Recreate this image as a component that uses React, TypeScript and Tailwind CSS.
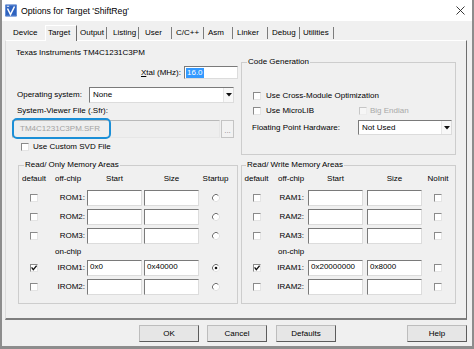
import React from "react";

function Check({ checked = false, disabled = false }: { checked?: boolean; disabled?: boolean }) {
  return (
    <span
      className={
        disabled
          ? "inline-flex h-[8px] w-[8px] shrink-0 items-center justify-center border border-t-[#c6c6c6] border-l-[#c6c6c6] border-r-[#ececec] border-b-[#ececec] bg-[#f6f6f6]"
          : "inline-flex h-[8px] w-[8px] shrink-0 items-center justify-center border border-t-[#8a8a8a] border-l-[#8a8a8a] border-r-[#e4e4e4] border-b-[#e4e4e4] bg-white"
      }
    >
      {checked && (
        <svg width="6" height="6" viewBox="0 0 6 6">
          <path d="M0.6 2.4 L2.3 4.6 L5.6 0.7" fill="none" stroke="#111" strokeWidth="1.3" />
        </svg>
      )}
    </span>
  );
}

function Radio({ checked = false }: { checked?: boolean }) {
  return (
    <svg width="8" height="8" viewBox="0 0 8 8">
      <circle cx="4" cy="4" r="3.5" fill="#fff" />
      <path d="M1.5 6.5 A3.5 3.5 0 0 1 6.5 1.5" stroke="#707070" fill="none" />
      <path d="M6.5 1.5 A3.5 3.5 0 0 1 1.5 6.5" stroke="#e2e2e2" fill="none" />
      {checked && <circle cx="4" cy="4" r="1.3" fill="#111" />}
    </svg>
  );
}

function Field({ value = "" }: { value?: string }) {
  return (
    <div className="h-[16px] w-[55px] border border-t-[#7a7a7a] border-l-[#7a7a7a] border-r-[#dcdcdc] border-b-[#dcdcdc] bg-white pl-[2px] leading-[12px]">
      {value}
    </div>
  );
}

function Dropdown({ value, className }: { value: string; className: string }) {
  return (
    <div
      className={`${className} flex items-center border border-t-[#7a7a7a] border-l-[#7a7a7a] border-r-[#dcdcdc] border-b-[#dcdcdc] bg-white`}
    >
      <span className="flex-1 pl-[3px]">{value}</span>
      <span className="flex h-full w-[10px] items-center justify-center border-l border-[#e6e6e6] bg-[#f8f8f8]">
        <svg width="6" height="4" viewBox="0 0 6 4">
          <path d="M0 0 H6 L3 3.5 Z" fill="#111" />
        </svg>
      </span>
    </div>
  );
}

type MemRow = { checked?: boolean; label: string; start?: string; size?: string; last?: "radio" | "radio-on" | "check" };

function LastCell({ kind }: { kind?: MemRow["last"] }) {
  if (kind === "check") return <Check />;
  return <Radio checked={kind === "radio-on"} />;
}

function ReadOnlyGroup() {
  const offChip: MemRow[] = [
    { label: "ROM1:", last: "radio" },
    { label: "ROM2:", last: "radio" },
    { label: "ROM3:", last: "radio" },
  ];
  const onChip: MemRow[] = [
    { checked: true, label: "IROM1:", start: "0x0", size: "0x40000", last: "radio-on" },
    { label: "IROM2:", last: "radio" },
  ];
  const row = (r: MemRow) => (
    <div key={r.label} className="mt-[3px] flex h-[16px] items-center first:mt-[6px]">
      <div className="flex w-[30px] justify-center">
        <Check checked={r.checked} />
      </div>
      <div className="w-[36px] text-right">{r.label}</div>
      <div className="ml-[2px]">
        <Field value={r.start} />
      </div>
      <div className="ml-[2px]">
        <Field value={r.size} />
      </div>
      <div className="flex w-[33px] justify-center">
        <LastCell kind={r.last} />
      </div>
    </div>
  );
  return (
    <fieldset className="ml-[6px] h-[144px] w-[220px] border border-[#cdcdcd]">
      <legend className="ml-[5px] px-[1px] leading-[10px]">Read/ Only Memory Areas</legend>
      <div className="mt-[4px] flex h-[10px] items-center whitespace-nowrap">
        <div className="w-[30px] text-center">default</div>
        <div className="w-[36px] pl-[6px]">off-chip</div>
        <div className="ml-[2px] w-[55px] text-center">Start</div>
        <div className="ml-[2px] w-[55px] text-center">Size</div>
        <div className="w-[33px] text-center">Startup</div>
      </div>
      <div className="flex flex-col">{offChip.map(row)}</div>
      <div className="mt-[3px] h-[10px] pl-[36px]">on-chip</div>
      <div className="flex flex-col [&>div:first-child]:mt-[3px]">{onChip.map(row)}</div>
    </fieldset>
  );
}

function ReadWriteGroup() {
  const offChip: MemRow[] = [
    { label: "RAM1:", last: "check" },
    { label: "RAM2:", last: "check" },
    { label: "RAM3:", last: "check" },
  ];
  const onChip: MemRow[] = [
    { checked: true, label: "IRAM1:", start: "0x20000000", size: "0x8000", last: "check" },
    { label: "IRAM2:", last: "check" },
  ];
  const row = (r: MemRow) => (
    <div key={r.label} className="mt-[3px] flex h-[16px] items-center first:mt-[6px]">
      <div className="flex w-[29px] justify-center">
        <Check checked={r.checked} />
      </div>
      <div className="w-[33px] text-right">{r.label}</div>
      <div className="ml-[4px]">
        <Field value={r.start} />
      </div>
      <div className="ml-[4px]">
        <Field value={r.size} />
      </div>
      <div className="flex w-[32px] justify-center">
        <LastCell kind={r.last} />
      </div>
    </div>
  );
  return (
    <fieldset className="ml-[3px] h-[144px] w-[215px] border border-[#cdcdcd]">
      <legend className="ml-[4px] px-[1px] leading-[10px]">Read/ Write Memory Areas</legend>
      <div className="mt-[4px] flex h-[10px] items-center whitespace-nowrap">
        <div className="w-[29px] text-center">default</div>
        <div className="w-[33px] pl-[7px]">off-chip</div>
        <div className="ml-[4px] w-[55px] text-center">Start</div>
        <div className="ml-[4px] w-[55px] text-center">Size</div>
        <div className="w-[32px] text-center">NoInit</div>
      </div>
      <div className="flex flex-col">{offChip.map(row)}</div>
      <div className="mt-[3px] h-[10px] pl-[36px]">on-chip</div>
      <div className="flex flex-col [&>div:first-child]:mt-[3px]">{onChip.map(row)}</div>
    </fieldset>
  );
}

function KeilIcon() {
  return (
    <svg width="12" height="13" viewBox="0 0 12 13">
      <rect x="0" y="0.5" width="12" height="12" rx="1" fill="#2f63bf" />
      <rect x="0.5" y="1" width="11" height="11" rx="0.8" fill="none" stroke="#8fb0e6" strokeWidth="0.6" />
      <path d="M2.5 4.5 L5.5 10.5 L9.5 2.5" fill="none" stroke="#fff" strokeWidth="1.5" />
      <path d="M1.8 2.6 Q3 1.6 4.2 2.6" fill="none" stroke="#fff" strokeWidth="0.9" />
    </svg>
  );
}

export default function App() {
  const tab = "h-[12px] mb-[1px] leading-[12px] border-r border-[#7c7c7c]";
  return (
    <div className="flex h-[349px] w-[474px] flex-col overflow-hidden border-l-2 border-r-2 border-b-[3px] border-[#8d8d8d] bg-[#f0f0f0] font-['Liberation_Sans',Arial,sans-serif] text-[8px] leading-[10px] text-black">
      {/* title bar */}
      <div className="flex h-[21px] shrink-0 items-center bg-white pl-[3px] pr-[7px]">
        <KeilIcon />
        <span className="ml-[4px] text-[8.7px]">Options for Target 'ShiftReg'</span>
        <svg className="ml-auto" width="9" height="9" viewBox="0 0 9 9">
          <path d="M0.5 0.5 L8.5 8.5 M8.5 0.5 L0.5 8.5" stroke="#222" strokeWidth="0.9" />
        </svg>
      </div>

      {/* tabs */}
      <div className="flex h-[19px] shrink-0 items-end whitespace-nowrap">
        <div className="mb-[1px] h-[12px] w-[43px] pl-[11px] leading-[12px]">Device</div>
        <div className="relative z-10 -mb-px h-[16px] w-[32px] border-t border-l border-r border-t-white border-l-white border-r-[#6d6d6d] bg-[#f0f0f0] pl-[2px] leading-[13px]">
          Target
        </div>
        <div className={`${tab} w-[30px] pl-[3px]`}>Output</div>
        <div className={`${tab} w-[32px] pl-[6px]`}>Listing</div>
        <div className={`${tab} w-[33px] pl-[6px]`}>User</div>
        <div className={`${tab} w-[32px] pl-[4px]`}>C/C++</div>
        <div className={`${tab} w-[29px] pl-[4px]`}>Asm</div>
        <div className={`${tab} w-[35px] pl-[4px]`}>Linker</div>
        <div className={`${tab} w-[32px] pl-[4px]`}>Debug</div>
        <div className={`${tab} w-[34px] pl-[3px]`}>Utilities</div>
      </div>

      {/* tab page */}
      <div className="ml-[3px] mr-[5px] flex h-[280px] shrink-0 flex-col border border-b-2 border-t-white border-l-[#dcdcdc] border-r-[#6e6e6e] border-b-[#7e7e7e] pl-[6px] pt-[7px]">
        <div className="flex">
          <div className="flex w-[226px] flex-col">
            <div className="h-[10px] pl-[4px]">Texas Instruments TM4C1231C3PM</div>
            <div className="mt-[8px] flex h-[13px] items-center justify-end">
              <span>
                <span className="underline">X</span>tal (MHz):
              </span>
              <div className="ml-[3px] flex h-[13px] w-[54px] items-center border border-t-[#7a7a7a] border-l-[#7a7a7a] border-r-[#dcdcdc] border-b-[#dcdcdc] bg-white pl-[1px]">
                <span className="bg-[#3399ff] px-[1px] text-white">16.0</span>
              </div>
            </div>
            <div className="mt-[8px] flex h-[16px] items-center pl-[5px] pr-[4px]">
              <span>Operating system:</span>
              <Dropdown value="None" className="ml-auto h-[16px] w-[145px]" />
            </div>
            <div className="mt-[3px] h-[10px] pl-[5px]">System-Viewer File (.Sfr):</div>
            <div className="mt-[4px] flex h-[18px]">
              <div className="relative flex w-[208px] items-center border border-t-[#b9b9b9] border-l-[#b9b9b9] border-r-[#e6e6e6] border-b-[#e6e6e6] bg-[#eeeeee] pl-[7px] text-[#a3a3a3]">
                TM4C1231C3PM.SFR
                <div className="absolute -top-[3px] -left-[1px] h-[21px] w-[99px] rounded-[5px] border-[2.5px] border-[#1b8fd7]" />
              </div>
              <div className="ml-[1px] flex w-[13px] items-end justify-center border border-[#c4c4c4] bg-[#f2f2f2] pb-[3px] leading-[6px] text-[#8a8a8a]">
                ...
              </div>
            </div>
            <div className="mt-[4px] flex h-[9px] items-center pl-[9px]">
              <Check />
              <span className="ml-[4px]">Use Custom SVD File</span>
            </div>
          </div>

          <fieldset className="ml-[3px] mt-[9px] h-[98px] w-[215px] border border-[#cdcdcd]">
            <legend className="ml-[5px] px-[1px] leading-[10px]">Code Generation</legend>
            <div className="mt-[24px] flex h-[10px] items-center pl-[11px]">
              <Check />
              <span className="ml-[5px]">Use Cross-Module Optimization</span>
            </div>
            <div className="mt-[5px] flex h-[10px] items-center pl-[11px]">
              <div className="flex w-[106px] items-center">
                <Check />
                <span className="ml-[5px]">Use MicroLIB</span>
              </div>
              <Check disabled />
              <span className="ml-[3px] text-[#a8a8a8]">Big Endian</span>
            </div>
            <div className="mt-[4px] flex h-[15px] items-center pl-[10px]">
              <span className="w-[106px]">Floating Point Hardware:</span>
              <Dropdown value="Not Used" className="h-[15px] w-[94px]" />
            </div>
          </fieldset>
        </div>

        <div className="mt-[5px] flex">
          <ReadOnlyGroup />
          <ReadWriteGroup />
        </div>
      </div>

      {/* buttons */}
      <div className="flex flex-1 items-start pt-[5px] pr-[5px]">
        {["OK", "Cancel", "Defaults"].map((b, i) => (
          <button
            key={b}
            className={`${i === 0 ? "ml-[137px]" : i === 1 ? "ml-[8px]" : "ml-[9px]"} h-[17px] w-[60px] border border-t-[#bdbdbd] border-l-[#bdbdbd] border-r-[#5c5c5c] border-b-[#5c5c5c] bg-[#e6e6e6] text-center text-[8px] leading-[15px]`}
          >
            {b}
          </button>
        ))}
        <button className="ml-auto h-[17px] w-[60px] border border-t-[#bdbdbd] border-l-[#bdbdbd] border-r-[#5c5c5c] border-b-[#5c5c5c] bg-[#e6e6e6] text-center text-[8px] leading-[15px]">
          Help
        </button>
      </div>
    </div>
  );
}
